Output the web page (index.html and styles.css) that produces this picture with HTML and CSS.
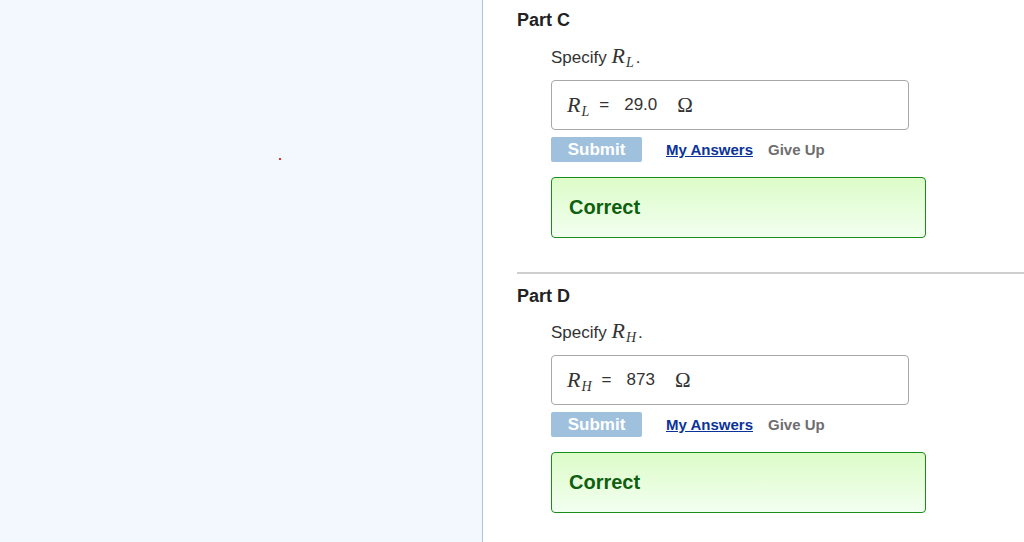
FILE: index.html
```html
<!DOCTYPE html>
<html>
<head>
<meta charset="utf-8">
<link rel="stylesheet" href="styles.css">
</head>
<body>
<div class="layout">
  <div class="left"><span class="dot"></span></div>
  <div class="right">
    <section class="part">
      <h2 class="part-title">Part C</h2>
      <div class="part-body">
        <p class="prompt">Specify <span class="math"><i>R</i><sub><i>L</i></sub></span>.</p>
        <div class="answer-box">
          <span class="math"><i>R</i><sub><i>L</i></sub></span><span class="eq">=</span><span class="val">29.0</span><span class="unit">Ω</span>
        </div>
        <div class="actions">
          <span class="btn-submit">Submit</span>
          <a class="link-answers">My Answers</a>
          <span class="link-giveup">Give Up</span>
        </div>
        <div class="correct">Correct</div>
      </div>
    </section>
    <hr class="sep">
    <section class="part">
      <h2 class="part-title">Part D</h2>
      <div class="part-body">
        <p class="prompt">Specify <span class="math"><i>R</i><sub><i>H</i></sub></span>.</p>
        <div class="answer-box">
          <span class="math"><i>R</i><sub><i>H</i></sub></span><span class="eq">=</span><span class="val">873</span><span class="unit">Ω</span>
        </div>
        <div class="actions">
          <span class="btn-submit">Submit</span>
          <a class="link-answers">My Answers</a>
          <span class="link-giveup">Give Up</span>
        </div>
        <div class="correct">Correct</div>
      </div>
    </section>
  </div>
</div>
</body>
</html>
```
FILE: styles.css
```css
html, body {
  margin: 0;
  padding: 0;
  height: 100%;
  background: #fff;
  font-family: "Liberation Sans", Arial, sans-serif;
  color: #222;
}
.layout {
  display: flex;
  height: 542px;
  overflow: hidden;
}
.left {
  width: 482px;
  flex: none;
  background: #f3f8fe;
  border-right: 1px solid #a9c6e0;
  position: relative;
}
.dot {
  position: absolute;
  left: 279px;
  top: 158px;
  width: 2px;
  height: 2px;
  background: #e8302a;
}
.right {
  flex: 1;
  padding-left: 34px;
  padding-top: 10px;
}
.part-title {
  margin: 0;
  font-size: 18px;
  font-weight: bold;
  line-height: 20px;
  color: #222;
}
.part-body {
  padding-left: 34px;
  padding-top: 15px;
}
.sep + .part .part-body { padding-top: 14px; }
.prompt {
  margin: 0;
  font-size: 17px;
  line-height: 22px;
  color: #333;
}
.math {
  font-family: "Liberation Serif", "Times New Roman", serif;
  font-size: 22px;
  color: #333;
}
.math sub {
  font-size: 14px;
  vertical-align: -4px;
  line-height: 0;
  margin-left: 1px;
}
.prompt .math { margin-right: 2px; }
.answer-box {
  margin-top: 11px;
  width: 358px;
  height: 50px;
  border: 1px solid #a8a8a8;
  border-radius: 4px;
  display: flex;
  align-items: center;
  padding-left: 15px;
  box-sizing: border-box;
  font-size: 17px;
  color: #333;
}
.eq { margin-left: 10px; }
.val { margin-left: 15px; }
.unit {
  margin-left: 20px;
  font-family: "Liberation Serif", "Times New Roman", serif;
  font-size: 21px;
}
.actions {
  display: flex;
  align-items: center;
  margin-top: 7px;
  height: 25px;
}
.btn-submit {
  width: 91px;
  height: 25px;
  background: #9fc1de;
  color: #fff;
  font-weight: bold;
  font-size: 17px;
  border-radius: 2px;
  display: flex;
  align-items: center;
  justify-content: center;
}
.link-answers {
  margin-left: 24px;
  color: #0a3399;
  font-weight: bold;
  font-size: 15px;
  text-decoration: underline;
}
.link-giveup {
  margin-left: 15px;
  color: #6e6e6e;
  font-weight: bold;
  font-size: 15px;
}
.correct {
  margin-top: 15px;
  width: 375px;
  height: 61px;
  box-sizing: border-box;
  border: 1px solid #1a8c1a;
  border-radius: 4px;
  background: linear-gradient(#dcfcc8, #f2fff0);
  color: #0f5f10;
  font-weight: bold;
  font-size: 20px;
  display: flex;
  align-items: center;
  padding-left: 17px;
}
.sep {
  margin: 34px 0 0 0;
  border: none;
  height: 2px;
  background: #cfcfcf;
}
.sep + .part { padding-top: 12px; }
```
